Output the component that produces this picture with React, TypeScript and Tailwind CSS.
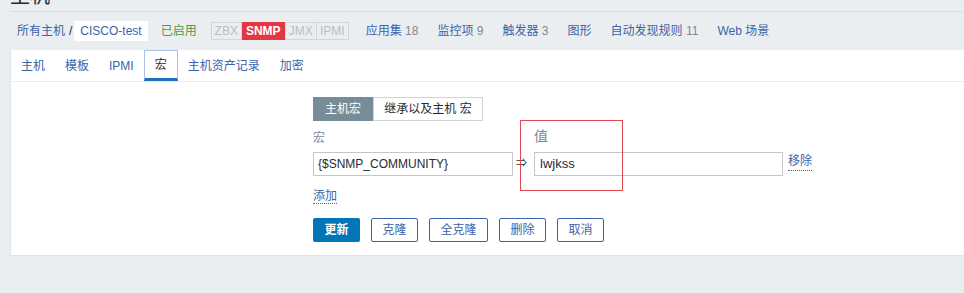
import React from 'react';

const font = { fontFamily: '"Liberation Sans", "Noto Sans CJK SC", sans-serif' };

const navLinks = [
  { label: '应用集', count: '18' },
  { label: '监控项', count: '9' },
  { label: '触发器', count: '3' },
  { label: '图形', count: '' },
  { label: '自动发现规则', count: '11' },
  { label: 'Web 场景', count: '' },
];

const tabs = ['主机', '模板', 'IPMI', '宏', '主机资产记录', '加密'];

export default function App() {
  return (
    <div className="min-h-[293px] w-[964px] overflow-hidden bg-[#ebeef0] pl-[10px] text-[12px] text-[#1f2c33]" style={font}>
      {/* page title, mostly scrolled off */}
      <div className="relative h-[12px] overflow-hidden border-b border-[#dadee1]">
        <h1 className="absolute left-0 top-[-16px] text-[20px] leading-[24px] text-[#1f2c33]">主机</h1>
      </div>

      {/* breadcrumbs + host nav */}
      <div className="flex h-[38px] items-center">
        <span className="ml-[7px] text-[#3c63a7]">所有主机</span>
        <span className="ml-[4px] text-[#1f2c33]">/</span>
        <span className="ml-[2px] flex h-[20px] items-center bg-white px-[6px] text-[#3c63a7]">CISCO-test</span>
        <span className="ml-[13px] text-[#429e47]">已启用</span>
        <div className="ml-[14px] flex h-[18px] items-stretch text-[12px]">
          <span className="flex w-[31px] items-center justify-center border border-[#d3d6d9] text-[#b9bec2]">ZBX</span>
          <span className="flex w-[43px] items-center justify-center bg-[#e33745] font-bold text-white">SNMP</span>
          <span className="flex w-[32px] items-center justify-center border border-[#d3d6d9] text-[#b9bec2]">JMX</span>
          <span className="flex w-[32px] items-center justify-center border border-l-0 border-[#d3d6d9] text-[#b9bec2]">IPMI</span>
        </div>
        <div className="ml-[17px] flex gap-[19px]">
          {navLinks.map((l) => (
            <span key={l.label} className="text-[#3c63a7]">
              {l.label}
              {l.count && <span className="text-[#7b8a93]"> {l.count}</span>}
            </span>
          ))}
        </div>
      </div>

      {/* panel */}
      <div className="h-[206px] border-b border-l border-[#dfe4e7] bg-white">
        <div className="flex h-[32px] items-stretch border-b border-[#ebeef0]">
          {tabs.map((t) => {
            const active = t === '宏';
            return (
              <div
                key={t}
                className={
                  active
                    ? 'flex items-center border border-b-[3px] border-[#aebfe9] border-b-[#1f6fc0] px-[10px] text-[#1f2c33]'
                    : 'flex items-center px-[10px] text-[#3c63a7]'
                }
              >
                {t}
              </div>
            );
          })}
        </div>

        <div className="relative pl-[302px] pt-[15px]">
          {/* toggle */}
          <div className="flex h-[24px]">
            <span className="flex w-[60px] items-center justify-center bg-[#768d99] text-white">主机宏</span>
            <span className="flex w-[110px] items-center justify-center border border-[#cfd4d7] text-[#1f2c33]">继承以及主机 宏</span>
          </div>

          {/* macro row */}
          <div className="mt-[5px] flex items-end">
            <div className="flex w-[200px] flex-col">
              <span className="mb-[5px] text-[#7b8a93]">宏</span>
              <div className="flex h-[24px] items-center border border-[#c2c7cb] px-[4px]">{'{$SNMP_COMMUNITY}'}</div>
            </div>
            <span className="mx-[3px] mb-[5px] text-[11px]">⇒</span>
            <div className="ml-[4px] flex w-[249px] flex-col">
              <span className="mb-[5px] text-[14px] text-[#7b8a93]">值</span>
              <div className="flex h-[24px] items-center border border-[#c2c7cb] px-[5px] text-[13px]">lwjkss</div>
            </div>
            <span className="mb-[5px] ml-[5px] border-b border-dotted border-[#3c63a7] text-[#3c63a7]">移除</span>
          </div>

          <div className="mt-[11px]">
            <span className="border-b border-dotted border-[#3c63a7] text-[#3c63a7]">添加</span>
          </div>

          {/* buttons */}
          <div className="mt-[13px] flex gap-[11px]">
            <span className="flex h-[24px] w-[47px] items-center justify-center rounded-[2px] bg-[#0275b8] font-bold text-white">更新</span>
            {['克隆', '全克隆', '删除', '取消'].map((b) => (
              <span
                key={b}
                className={`flex h-[24px] items-center justify-center rounded-[2px] border border-[#3c63a7] text-[#3c63a7] ${b === '全克隆' ? 'w-[59px]' : 'w-[47px]'}`}
              >
                {b}
              </span>
            ))}
          </div>

          {/* annotation box drawn over the form */}
          <div className="pointer-events-none absolute left-[509px] top-[38px] h-[71px] w-[103px] border border-[#e2474f]" />
        </div>
      </div>
    </div>
  );
}
